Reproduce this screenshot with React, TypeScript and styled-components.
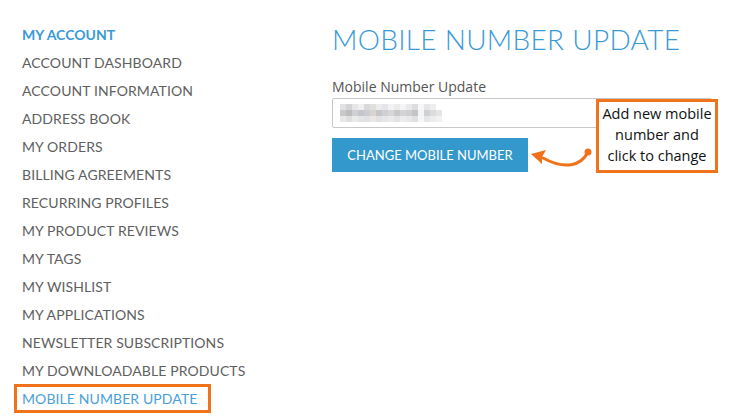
import React, { FC } from 'react';
import styled, { createGlobalStyle } from 'styled-components';

const GlobalStyle = createGlobalStyle`
  html, body {
    margin: 0;
    padding: 0;
    background: #fff;
  }
  body {
    font-family: Lato, "Liberation Sans", sans-serif;
  }
`;

const Page = styled.div`
  display: flex;
  width: 733px;
  height: 416px;
  overflow: hidden;
  position: relative;
`;

const Sidebar = styled.nav`
  width: 310px;
  flex-shrink: 0;
  padding: 26px 0 0 14px;
  box-sizing: border-box;
  display: flex;
  flex-direction: column;
  align-items: flex-start;
`;

const NavTitle = styled.div`
  font-family: Lato, "Liberation Sans", sans-serif;
  font-size: 14px;
  font-weight: 700;
  color: #3a9ad8;
  line-height: 17px;
  padding: 0 8px;
  margin-bottom: 6px;
`;

const NavItem = styled.a<{ $active?: boolean }>`
  font-family: Lato, "Liberation Sans", sans-serif;
  font-size: 14px;
  line-height: 17px;
  padding: 3px ${(p) => (p.$active ? '11px' : '5px')} 3px 5px;
  margin-top: -1px;
  color: ${(p) => (p.$active ? '#4a9fd8' : '#606060')};
  border: 3px solid ${(p) => (p.$active ? '#f0721a' : 'transparent')};
  text-decoration: none;
  text-transform: uppercase;
  letter-spacing: 0.1px;
`;

const Main = styled.main`
  flex: 1;
  padding: 24px 0 0 22px;
  display: flex;
  flex-direction: column;
  align-items: flex-start;
`;

const Heading = styled.h1`
  margin: 0 0 24px;
  font-family: Lato, "Liberation Sans", sans-serif;
  font-weight: 300;
  font-size: 28px;
  line-height: 30px;
  color: #3a9ad6;
  letter-spacing: 0.3px;
`;

const Label = styled.label`
  font-family: "Open Sans", "Liberation Sans", sans-serif;
  font-size: 14px;
  line-height: 18px;
  color: #555;
  margin-bottom: 2px;
`;

const InputBox = styled.div`
  width: 380px;
  height: 30px;
  box-sizing: border-box;
  border: 1px solid #c8c8c8;
  border-radius: 2px;
  display: flex;
  align-items: center;
  padding: 0 7px;
  margin-bottom: 10px;
`;

const Button = styled.button`
  width: 196px;
  height: 34px;
  border: none;
  background: #3399cc;
  color: #fff;
  font-family: Lato, "Liberation Sans", sans-serif;
  font-size: 13px;
  text-transform: uppercase;
  padding: 0;
  cursor: pointer;
`;

const Callout = styled.div`
  position: absolute;
  left: 596px;
  top: 99px;
  width: 122px;
  height: 74px;
  box-sizing: border-box;
  border: 3px solid #f0721a;
  background: #fff;
  display: flex;
  align-items: center;
  justify-content: center;
  text-align: center;
  font-family: "Open Sans", "Liberation Sans", sans-serif;
  font-size: 14.5px;
  line-height: 21px;
  color: #111;
  padding-bottom: 3px;
`;

const Arrow = styled.svg`
  position: absolute;
  left: 525px;
  top: 140px;
`;

const items = [
  'Account Dashboard',
  'Account Information',
  'Address Book',
  'My Orders',
  'Billing Agreements',
  'Recurring Profiles',
  'My Product Reviews',
  'My Tags',
  'My Wishlist',
  'My Applications',
  'Newsletter Subscriptions',
  'My Downloadable Products',
];

// pixelated (obscured) phone number
const mosaic = [
  '#e2e2e2', '#d4d4d6', '#e6e6e6', '#f0f0f2', '#d9d9dc', '#e0dfdc', '#ececec', '#e4e6ea', '#f2f2f2',
  '#ebebeb', '#f4f4f4', '#e9e9ea', '#dddde0', '#f7f7f7', '#e6e6e6', '#eeeeee', '#ffffff',
  '#c9c9cb', '#bdbdc0', '#d0d0d2', '#c3c6cc', '#cbccd0', '#d8d4cf', '#c6c6c8', '#ced0d4', '#d7d7d9',
  '#c8c8ca', '#d4d4d6', '#cfcfd1', '#c2c4c8', '#f4f4f4', '#cdd0d4', '#dcdcdc', '#e5e5e5',
  '#e8e8e8', '#dedede', '#eaeaea', '#e4e4e6', '#e1e2e4', '#ebe8e4', '#e2e2e4', '#e6e7e9', '#eaeaea',
  '#e3e3e3', '#ececec', '#e8e8e8', '#e0e0e2', '#f6f6f6', '#e4e6e8', '#ececec', '#f2f2f2',
];

const Mosaic: FC = () => (
  <svg width="102" height="18" viewBox="0 0 102 18">
    {mosaic.map((c, i) => (
      <rect key={i} x={(i % 17) * 6} y={Math.floor(i / 17) * 6} width="6" height="6" fill={c} />
    ))}
  </svg>
);

const App: FC = () => {
  return (
    <Page>
      <GlobalStyle />
      <Sidebar>
        <NavTitle>MY ACCOUNT</NavTitle>
        {items.map((it) => (
          <NavItem key={it}>{it}</NavItem>
        ))}
        <NavItem $active>Mobile Number Update</NavItem>
      </Sidebar>
      <Main>
        <Heading>MOBILE NUMBER UPDATE</Heading>
        <Label>Mobile Number Update</Label>
        <InputBox>
          <Mosaic />
        </InputBox>
        <Button>Change Mobile Number</Button>
      </Main>
      <Arrow width="70" height="34" viewBox="0 0 70 34">
        <path d="M63 12 C 56 26, 40 30, 18 18" fill="none" stroke="#f0721a" strokeWidth="3" strokeLinecap="round" />
        <circle cx="63" cy="12" r="3.5" fill="#f0721a" />
        <path d="M6 14 L 21 10 L 17 17 L 17 24 Z" fill="#f0721a" />
      </Arrow>
      <Callout>
        Add new mobile
        <br />
        number and
        <br />
        click to change
      </Callout>
    </Page>
  );
};

export default App;
